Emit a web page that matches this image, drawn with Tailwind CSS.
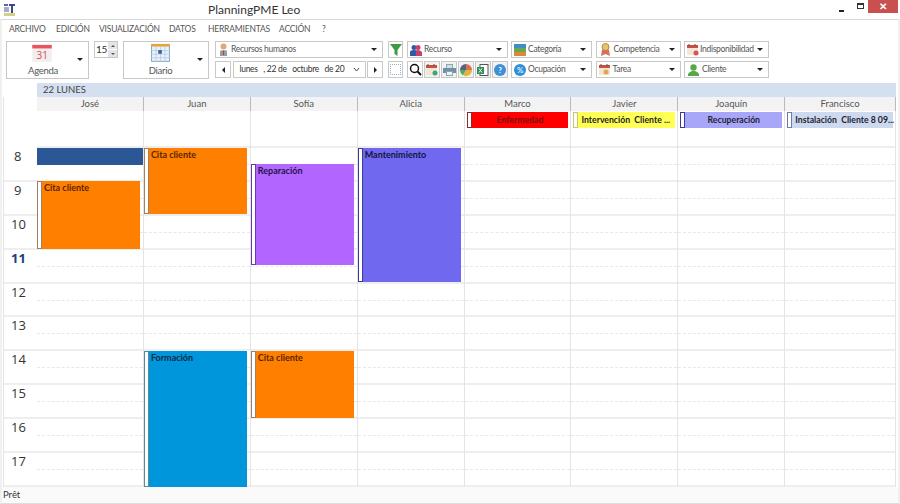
<!DOCTYPE html>
<html lang="en">
<head>
<meta charset="UTF-8">
<title>PlanningPME Leo</title>
<script src="https://cdn.jsdelivr.net/npm/@tailwindcss/browser@4"></script>
</head>
<body class="w-[900px] h-[504px] overflow-hidden bg-white text-[#444] font-['Lato','Noto_Sans',sans-serif]">

<!-- title bar -->
<div class="h-[19px] flex items-center relative">
  <svg class="ml-[3px] w-[13px] h-[14px]" viewBox="0 0 13 14">
    <rect x="1" y="1" width="4" height="2" fill="#5a68a8"/><rect x="6" y="1" width="6" height="2" fill="#3a4a8c"/>
    <rect x="8" y="3" width="2" height="7" fill="#3a4a8c"/><rect x="1" y="4" width="5" height="5" fill="#a3abd4"/>
    <rect x="1" y="10" width="11" height="3" fill="#d4cf8a"/>
  </svg>
  <span class="absolute left-[208px] top-[2px] text-[12px] leading-[15px] text-[#333]">PlanningPME Leo</span>
  <div class="ml-auto flex items-center h-[13px] self-start">
    <div class="w-[5px] h-[2px] bg-[#222] mt-[8px] mr-[13px]"></div>
    <div class="w-[7px] h-[6px] border border-[#333] border-t-2 mr-[4px] mb-[2px]"></div>
    <div class="w-[30px] h-[13px] bg-[#c9504f] text-white text-[10px] leading-[12px] text-center font-bold">✕</div>
    <div class="w-[2px]"></div>
  </div>
</div>

<!-- window body -->
<div class="h-[485px] border-t border-[#d8d8d8] border-x-2 border-x-[#f0f0f0] border-b border-b-[#ddd] flex flex-col">
  <!-- menu -->
  <div class="h-[18px] flex items-center gap-[12px] pl-[7px] text-[8.5px] tracking-[-0.2px] text-[#555]">
    <span class="w-[35px]">ARCHIVO</span><span class="w-[31px]">EDICIÓN</span><span class="w-[58px] whitespace-nowrap">VISUALIZACIÓN</span><span class="w-[27px]">DATOS</span><span class="w-[59px] whitespace-nowrap">HERRAMIENTAS</span><span class="w-[31px]">ACCIÓN</span><span>?</span>
  </div>

  <!-- toolbar -->
  <div class="h-[45px] flex pl-[4px] pt-[3px] text-[8.5px] tracking-[-0.3px] text-[#555]">
    <button class="w-[83px] h-[38px] border border-[#c8c8c8] relative flex flex-col items-center pt-[2px]">
      <svg class="w-[22px] h-[20px] mr-[11px]" viewBox="0 0 22 20">
        <rect x="0" y="1" width="22" height="19" fill="#f1eef0"/><rect x="0" y="1" width="22" height="4" fill="#e8555f"/>
        <text x="11" y="17" text-anchor="middle" font-size="12" fill="#d9534f" font-family="Open Sans">31</text>
      </svg>
      <span class="mr-[9px] mt-[2px] text-[9.5px]">Agenda</span>
      <span class="absolute right-[5px] top-[16px] border-x-[3px] border-x-transparent border-t-[3px] border-t-[#222]"></span>
    </button>
    <div class="ml-[5px] w-[24px] h-[17px] border border-[#c8c8c8] flex text-[10px] leading-[14px] pl-[1px] text-[#333]">
      <span>15</span>
      <div class="ml-auto w-[9px] flex flex-col">
        <span class="h-[8px] bg-[#e4e4e4] border-b border-white flex items-center justify-center"><span class="border-x-[2px] border-x-transparent border-b-[2px] border-b-[#555]"></span></span>
        <span class="h-[7px] bg-[#e4e4e4] flex items-center justify-center"><span class="border-x-[2px] border-x-transparent border-t-[2px] border-t-[#555]"></span></span>
      </div>
    </div>
    <button class="ml-[5px] w-[86px] h-[38px] border border-[#c8c8c8] relative flex flex-col items-center pt-[1px]">
      <svg class="w-[21px] h-[21px] mr-[11px]" viewBox="0 0 21 21">
        <rect x="0.5" y="2.5" width="20" height="18" fill="#eaf1f8" stroke="#6d9ec4"/><rect x="0" y="1" width="21" height="3" fill="#e5a43c"/>
        <path d="M0 8.5H21M0 12.5H21M0 16.5H21M5.5 4V21M10.5 4V21M15.5 4V21" stroke="#b9cfe2" stroke-width="1"/>
        <rect x="8" y="8" width="4" height="4" fill="#2d5fa8"/>
      </svg>
      <span class="mr-[11px] mt-[2px] text-[9.5px]">Diario</span>
      <span class="absolute right-[5px] top-[16px] border-x-[3px] border-x-transparent border-t-[3px] border-t-[#222]"></span>
    </button>

    <!-- resources and date -->
    <div class="ml-[6px] w-[168px] flex flex-col gap-[3px]">
      <div class="h-[17px] border border-[#c8c8c8] flex items-center pl-[3px] pr-[5px]">
        <svg class="w-[9px] h-[14px] mr-[3px]" viewBox="0 0 9 14"><circle cx="4.5" cy="3.5" r="3" fill="#e0a878"/><path d="M1 13V8.5Q1 7 4.5 7T8 8.5V13Z" fill="#8fa0a8"/><path d="M4 8H5V12H4Z" fill="#c0392b"/></svg>
        <span>Recursos humanos</span>
        <span class="ml-auto border-x-[3px] border-x-transparent border-t-[3px] border-t-[#222]"></span>
      </div>
      <div class="h-[17px] flex justify-between">
        <span class="w-[16px] border border-[#c8c8c8] flex items-center justify-center"><span class="border-y-[3px] border-y-transparent border-r-[3px] border-r-[#222]"></span></span>
        <div class="w-[133px] border border-[#c8c8c8] flex items-center pl-[6px] pr-[5px] whitespace-pre text-[#333]">
          <span>lunes   , 22 de   octubre   de 20</span>
          <svg class="ml-auto w-[7px] h-[5px] shrink-0" viewBox="0 0 7 5"><path d="M1 1L3.5 4L6 1" fill="none" stroke="#444"/></svg>
        </div>
        <span class="w-[16px] border border-[#c8c8c8] flex items-center justify-center"><span class="border-y-[3px] border-y-transparent border-l-[3px] border-l-[#222]"></span></span>
      </div>
    </div>

    <!-- filter and tool icons -->
    <div class="ml-[5px] flex flex-col gap-[3px]">
      <div class="h-[17px] flex gap-[4px]">
        <span class="w-[15px] border border-[#c8c8c8] flex items-center justify-center">
          <svg class="w-[12px] h-[12px]" viewBox="0 0 12 12"><path d="M0 0H12L7.5 6V12L4.5 10V6Z" fill="#3f9a45"/></svg>
        </span>
        <div class="w-[101px] border border-[#c8c8c8] flex items-center pl-[2px] pr-[5px]">
          <svg class="w-[12px] h-[12px] mr-[2px]" viewBox="0 0 12 12"><circle cx="4" cy="3.5" r="2.5" fill="#2e5aa8"/><path d="M0 12V8Q0 6 4 6T8 8V12Z" fill="#2e5aa8"/><circle cx="8" cy="3.5" r="2.5" fill="#c9406a"/><path d="M6 12V8Q6 6 8 6T12 8V12Z" fill="#c9406a"/></svg>
          <span>Recurso</span>
          <span class="ml-auto border-x-[3px] border-x-transparent border-t-[3px] border-t-[#222]"></span>
        </div>
      </div>
      <div class="h-[17px] flex gap-[4px]">
        <span class="w-[15px] border border-[#c8c8c8] flex items-center justify-center">
          <span class="w-[11px] h-[11px] border border-dotted border-[#8fb0d4]"></span>
        </span>
        <div class="flex gap-[1px]">
          <span class="w-[16px] border border-[#c8c8c8] flex items-center justify-center">
            <svg class="w-[13px] h-[13px]" viewBox="0 0 13 13"><circle cx="5.5" cy="5.5" r="4" fill="none" stroke="#111" stroke-width="1.5"/><path d="M8.5 8.5L12 12" stroke="#111" stroke-width="2"/></svg>
          </span>
          <span class="w-[16px] border border-[#c8c8c8] bg-[#f2f2f2] flex items-center justify-center">
            <svg class="w-[12px] h-[12px]" viewBox="0 0 12 12"><rect y="1" width="11" height="10" fill="#f3e6d6"/><rect y="1" width="11" height="3" fill="#c8503c"/><path d="M2 0V2M8 0V2" stroke="#555"/><circle cx="9" cy="9" r="2.5" fill="#3fa66a"/></svg>
          </span>
          <span class="w-[16px] border border-[#c8c8c8] bg-[#f2f2f2] flex items-center justify-center">
            <svg class="w-[13px] h-[12px]" viewBox="0 0 13 12"><rect x="3.5" y="0.5" width="6" height="4" fill="#d5dde5" stroke="#8aa"/><rect x="0" y="4" width="13" height="5" fill="#6f8ea8"/><rect x="3.5" y="7.5" width="6" height="4" fill="#eef2f5" stroke="#8aa"/></svg>
          </span>
          <span class="w-[16px] border border-[#c8c8c8] bg-[#f2f2f2] flex items-center justify-center">
            <svg class="w-[12px] h-[12px]" viewBox="0 0 12 12"><path d="M6 6V0A6 6 0 0 1 12 6Z" fill="#d9704f"/><path d="M6 6H12A6 6 0 0 1 3 11.2Z" fill="#e3b53c"/><path d="M3 11.2A6 6 0 0 1 0 6H6Z" fill="#4caf50"/><path d="M6 6H0A6 6 0 0 1 6 0Z" fill="#5a5f8a"/></svg>
          </span>
          <span class="w-[16px] border border-[#c8c8c8] bg-[#f2f2f2] flex items-center justify-center">
            <svg class="w-[12px] h-[12px]" viewBox="0 0 12 12"><rect x="3" y="0.5" width="8" height="11" fill="#fff" stroke="#555"/><rect x="0" y="3" width="7" height="7" fill="#2f8f5b"/><path d="M2 4.5L5 8.5M5 4.5L2 8.5" stroke="#fff"/></svg>
          </span>
          <span class="w-[16px] border border-[#c8c8c8] bg-[#f2f2f2] flex items-center justify-center">
            <span class="w-[12px] h-[12px] rounded-full bg-[#3d8fd6] text-white text-[8px] leading-[12px] text-center font-bold">?</span>
          </span>
        </div>
      </div>
    </div>

    <!-- pickers -->
    <div class="ml-[3px] w-[258px] grid grid-cols-[81px_85px_85px] gap-x-[3.5px] gap-y-[3px] auto-rows-[17px]">
      <div class="border border-[#c8c8c8] flex items-center pl-[2px] pr-[5px]">
        <svg class="w-[12px] h-[12px] mr-[2px]" viewBox="0 0 12 12"><rect width="12" height="4" fill="#3d8fc4"/><rect y="4" width="12" height="4" fill="#6aa84f"/><rect y="8" width="12" height="4" fill="#d98a3a"/></svg>
        <span>Categoría</span><span class="ml-auto border-x-[3px] border-x-transparent border-t-[3px] border-t-[#222]"></span>
      </div>
      <div class="border border-[#c8c8c8] flex items-center pl-[3px] pr-[5px]">
        <svg class="w-[11px] h-[13px] mr-[3px]" viewBox="0 0 11 13"><circle cx="5.5" cy="4" r="3.5" fill="#e3c46f" stroke="#b88a2e"/><path d="M2 7L1 13L5.5 11L10 13L9 7Z" fill="#d9705a"/></svg>
        <span>Competencia</span><span class="ml-auto border-x-[3px] border-x-transparent border-t-[3px] border-t-[#222]"></span>
      </div>
      <div class="border border-[#c8c8c8] flex items-center pl-[2px] pr-[5px]">
        <svg class="w-[12px] h-[12px] mr-[1px] shrink-0" viewBox="0 0 12 12"><rect y="1" width="11" height="10" fill="#f3e6d6"/><rect y="1" width="11" height="3" fill="#c8503c"/><path d="M2 0V2M8 0V2" stroke="#555"/><circle cx="9" cy="9" r="2.5" fill="#d9534f"/></svg>
        <span class="whitespace-nowrap">Indisponibilidad</span><span class="ml-auto border-x-[3px] border-x-transparent border-t-[3px] border-t-[#222]"></span>
      </div>
      <div class="border border-[#c8c8c8] flex items-center pl-[2px] pr-[5px]">
        <span class="w-[12px] h-[12px] mr-[2px] rounded-full bg-[#2e8fd8] text-white text-[8px] leading-[12px] text-center">%</span>
        <span>Ocupación</span><span class="ml-auto border-x-[3px] border-x-transparent border-t-[3px] border-t-[#222]"></span>
      </div>
      <div class="border border-[#c8c8c8] flex items-center pl-[2px] pr-[5px]">
        <svg class="w-[12px] h-[12px] mr-[2px]" viewBox="0 0 12 12"><rect y="1" width="11" height="10" fill="#f3e6d6"/><rect y="1" width="11" height="3" fill="#c8503c"/><path d="M2 0V2M8 0V2" stroke="#555"/><circle cx="7" cy="8" r="2.5" fill="#e0a84f"/></svg>
        <span>Tarea</span><span class="ml-auto border-x-[3px] border-x-transparent border-t-[3px] border-t-[#222]"></span>
      </div>
      <div class="border border-[#c8c8c8] flex items-center pl-[3px] pr-[5px]">
        <svg class="w-[11px] h-[12px] mr-[3px]" viewBox="0 0 11 12"><circle cx="5.5" cy="3.5" r="3.2" fill="#58a846"/><path d="M0 12V10Q1 8 4 7H7Q10 8 11 10V12Z" fill="#58a846"/></svg>
        <span>Cliente</span><span class="ml-auto border-x-[3px] border-x-transparent border-t-[3px] border-t-[#222]"></span>
      </div>
    </div>
  </div>

  <!-- planning -->
  <div class="h-[404px] flex flex-col">
    <div class="ml-[35px] mr-[2px] h-[14px] bg-[#d4dff0] pl-[6px] text-[9.5px] leading-[14px] text-[#444]">22 LUNES</div>
    <div class="flex flex-1 ml-[1px]">
      <!-- hours -->
      <div class="w-[34px] flex flex-col border-l border-[#e4e4e4] pt-[51px] text-[13px] leading-[16px] text-[#333] font-['Open_Sans',sans-serif]">
        <div class="h-[33.9px] border-b-2 border-[#eeeeee] pl-[10px]">8</div>
        <div class="h-[33.9px] border-b-2 border-[#eeeeee] pl-[10px]">9</div>
        <div class="h-[33.9px] border-b-2 border-[#eeeeee] pl-[7px]">10</div>
        <div class="h-[33.9px] border-b-2 border-[#eeeeee] pl-[7px] font-bold text-[#1f3f7a]">11</div>
        <div class="h-[33.9px] border-b-2 border-[#eeeeee] pl-[7px]">12</div>
        <div class="h-[33.9px] border-b-2 border-[#eeeeee] pl-[7px]">13</div>
        <div class="h-[33.9px] border-b-2 border-[#eeeeee] pl-[7px]">14</div>
        <div class="h-[33.9px] border-b-2 border-[#eeeeee] pl-[7px]">15</div>
        <div class="h-[33.9px] border-b-2 border-[#eeeeee] pl-[7px]">16</div>
        <div class="h-[33.9px] border-b-2 border-[#eeeeee] pl-[7px]">17</div>
      </div>
      <div id="columns" class="flex flex-1 mr-[2px] text-[10px]"></div>
    </div>
  </div>

  <!-- status bar -->
  <div class="h-[16px] pl-[1px] text-[9.5px] leading-[16px] text-[#333] bg-[#fafafa]">Prêt</div>
</div>

<script>
  const hourHeight = 33.9;
  const names = ['José', 'Juan', 'Sofía', 'Alicia', 'Marco', 'Javier', 'Joaquín', 'Francisco'];
  const allDay = {
    Marco: { label: 'Enfermedad', bg: '#ff0000', color: '#7a1010', edge: '#8a2a2a', center: true },
    Javier: { label: 'Intervención  Cliente ...', bg: '#ffff55', color: '#222', edge: '#c9c96a' },
    'Joaquín': { label: 'Recuperación', bg: '#a8a6f8', color: '#223', edge: '#3a3a9a', center: true },
    Francisco: { label: 'Instalación  Cliente 8 09...', bg: '#cdd9ee', color: '#223', edge: '#6a7ea8' }
  };
  const events = {
    'José': [
      { top: 0, h: 17, bg: '#2b5797', full: true },
      { top: 33, h: 68, bg: '#ff8000', label: 'Cita cliente', color: '#5a2400', edge: '#a08060' }
    ],
    Juan: [
      { top: 0, h: 66, bg: '#ff8000', label: 'Cita cliente', color: '#5a2400', edge: '#a08060' },
      { top: 203, h: 136, bg: '#0096dc', label: 'Formación', color: '#0c2c44', edge: '#5a8a9a' }
    ],
    'Sofía': [
      { top: 16, h: 101, bg: '#b266ff', label: 'Reparación', color: '#221445', edge: '#6a3ab0' },
      { top: 203, h: 67, bg: '#ff8000', label: 'Cita cliente', color: '#5a2400', edge: '#a08060' }
    ],
    Alicia: [
      { top: 0, h: 134, bg: '#7069f0', label: 'Mantenimiento', color: '#14143f', edge: '#3a3a9a' }
    ]
  };

  const columns = document.getElementById('columns');
  names.forEach((name, i) => {
    const col = document.createElement('div');
    col.className = (i < 7 ? 'w-[106.9px] ' : 'flex-1 ') + 'flex flex-col border-r border-[#e4e4e4] min-w-0';

    let html = `<div class="h-[14px] bg-[#f3f3f3] text-center text-[9.5px] leading-[14px] text-[#555] border-r border-[#bbb] -mr-px">${name}</div>`;

    const a = allDay[name];
    html += `<div class="h-[37px] relative border-b-2 border-[#eeeeee]">`;
    if (a) {
      html += `<div class="absolute left-[2px] right-[2px] top-[1px] h-[16px] flex font-['Lato',sans-serif] font-bold text-[8.7px] leading-[15px] whitespace-pre" style="background:${a.bg};color:${a.color}">
        <span class="w-[5px] h-[16px] shrink-0 bg-white border" style="border-color:${a.edge}"></span>
        <span class="flex-1 ${a.center ? 'text-center' : 'pl-[3px]'}">${a.label}</span></div>`;
    }
    html += `</div><div class="relative flex-1">`;
    for (let r = 0; r < 10; r++) {
      html += `<div class="border-b-2 border-[#eeeeee]" style="height:${hourHeight}px"><div class="h-[17px] border-b border-dashed border-[#e8e8e8]"></div></div>`;
    }
    (events[name] || []).forEach(e => {
      const width = e.full ? 'right-0' : 'right-[3px]';
      html += `<div class="absolute left-0 ${width} flex font-['Lato',sans-serif] font-bold text-[9px] leading-[13px]" style="top:${e.top}px;height:${e.h}px;background:${e.bg};color:${e.color}">`;
      if (e.label) {
        html += `<span class="w-[5px] shrink-0 bg-white border" style="border-color:${e.edge}"></span><span class="pl-[2px]">${e.label}</span>`;
      }
      html += `</div>`;
    });
    html += `</div>`;
    col.innerHTML = html;
    columns.appendChild(col);
  });
</script>
</body>
</html>
